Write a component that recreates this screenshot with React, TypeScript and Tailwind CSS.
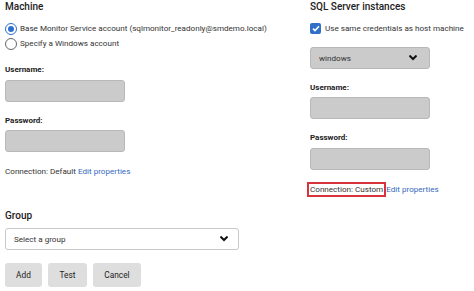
import React from "react";

const Chevron = () => (
  <svg width="8" height="6" viewBox="0 0 8 6" className="shrink-0">
    <path d="M1.2 1.2 L4 4 L6.8 1.2" fill="none" stroke="#111" strokeWidth="2" strokeLinecap="square" />
  </svg>
);

const Radio = ({ checked }: { checked?: boolean }) => (
  <span
    className={
      checked
        ? "w-[12px] h-[12px] rounded-full border-[1.5px] border-[#2f6fd0] flex items-center justify-center shrink-0"
        : "w-[12px] h-[12px] rounded-full border-[1.2px] border-[#666] shrink-0"
    }
  >
    {checked && <span className="w-[6px] h-[6px] rounded-full bg-[#2f6fd0]" />}
  </span>
);

const GrayInput = () => (
  <div className="w-[120px] h-[22px] rounded-[3px] bg-[#cbcbcb] border border-[#b8b8b8]" />
);

export default function App() {
  return (
    <div
      className="w-[474px] h-[291px] bg-white flex text-[#222] overflow-hidden"
      style={{ fontFamily: "Roboto, 'Liberation Sans', sans-serif" }}
    >
      {/* Left column */}
      <div className="w-[310px] shrink-0 pl-[5px] flex flex-col">
        <div className="text-[10px] leading-[14px] font-medium text-[#222]">Machine</div>
        <div className="mt-[7px] h-[15px] flex items-center gap-[3px] text-[8.1px] text-[#333]">
          <Radio checked />
          <span>Base Monitor Service account (sqlmonitor_readonly@smdemo.local)</span>
        </div>
        <div className="h-[15px] flex items-center gap-[3px] text-[8.1px] text-[#333]">
          <Radio />
          <span>Specify a Windows account</span>
        </div>
        <div className="mt-[13px] text-[8px] leading-[12px] font-bold">Username:</div>
        <div className="mt-[4px]">
          <GrayInput />
        </div>
        <div className="mt-[13px] text-[8px] leading-[12px] font-bold">Password:</div>
        <div className="mt-[3px]">
          <GrayInput />
        </div>
        <div className="mt-[13px] text-[8.1px] leading-[12px] text-[#333]">
          Connection: Default <span className="text-[#3569c0]">Edit properties</span>
        </div>
        <div className="mt-[32px] text-[10px] leading-[14px] font-medium">Group</div>
        <div className="mt-[5px] w-[234px] h-[22px] rounded-[3px] border border-[#c8c8c8] bg-white flex items-center justify-between pl-[8px] pr-[10px] text-[8.1px] text-[#333]">
          <span>Select a group</span>
          <Chevron />
        </div>
        <div className="mt-[13px] flex gap-[6px] text-[8.3px]">
          <div className="w-[37px] h-[24px] rounded-[3px] bg-[#dedede] flex items-center justify-center">Add</div>
          <div className="w-[39px] h-[24px] rounded-[3px] bg-[#dedede] flex items-center justify-center">Test</div>
          <div className="w-[48px] h-[24px] rounded-[3px] bg-[#dedede] flex items-center justify-center">Cancel</div>
        </div>
      </div>

      {/* Right column */}
      <div className="flex-1 flex flex-col">
        <div className="text-[10px] leading-[14px] font-medium">SQL Server instances</div>
        <div className="mt-[7px] h-[15px] flex items-center gap-[4px] text-[8.1px] text-[#333]">
          <span className="w-[11px] h-[11px] rounded-[2px] bg-[#3170c8] flex items-center justify-center shrink-0">
            <svg width="8" height="7" viewBox="0 0 8 7">
              <path d="M1 3.6 L3 5.6 L7 1.2" fill="none" stroke="#fff" strokeWidth="1.5" />
            </svg>
          </span>
          <span>Use same credentials as host machine</span>
        </div>
        <div className="mt-[11px] w-[120px] h-[22px] rounded-[3px] bg-[#cbcbcb] border border-[#b8b8b8] flex items-center justify-between pl-[8px] pr-[12px] text-[8.1px] text-[#333]">
          <span>windows</span>
          <Chevron />
        </div>
        <div className="mt-[13px] text-[8px] leading-[12px] font-bold">Username:</div>
        <div className="mt-[3px]">
          <GrayInput />
        </div>
        <div className="mt-[13px] text-[8px] leading-[12px] font-bold">Password:</div>
        <div className="mt-[4px]">
          <GrayInput />
        </div>
        <div className="mt-[12px] flex items-center text-[8.1px] leading-[11px] text-[#333]">
          <span className="-ml-[3px] border-2 border-[#d8323a] pl-[1px] pr-[1px]">Connection: Custom</span>
          <span className="text-[#3569c0]">Edit properties</span>
        </div>
      </div>
    </div>
  );
}
